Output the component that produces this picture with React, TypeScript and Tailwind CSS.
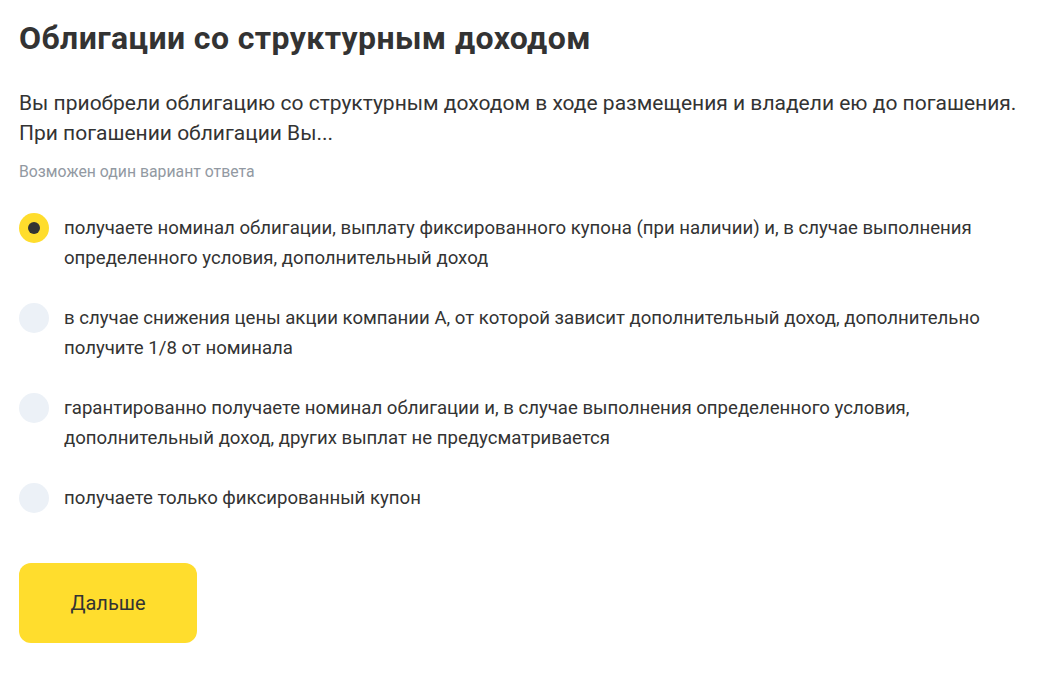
import React, {useState} from 'react';

const options = [
    'получаете номинал облигации, выплату фиксированного купона (при наличии) и, в случае выполнения определенного условия, дополнительный доход',
    'в случае снижения цены акции компании А, от которой зависит дополнительный доход, дополнительно получите 1/8 от номинала',
    'гарантированно получаете номинал облигации и, в случае выполнения определенного условия, дополнительный доход, других выплат не предусматривается',
    'получаете только фиксированный купон',
];

const App: React.FC = () => {
    const [selected, setSelected] = useState(0);

    return (
        <div className="min-h-screen bg-white text-[#333333] pl-[19px] pr-[3px] pt-[15px]" style={{fontFamily: 'Roboto, "Noto Sans", sans-serif'}}>
            <h1 className="text-[32px] leading-[46px] font-bold tracking-[0.4px]">Облигации со структурным доходом</h1>

            <p className="mt-[27px] text-[21px] leading-[30px]">
                Вы приобрели облигацию со структурным доходом в ходе размещения и владели ею до погашения. При погашении облигации Вы...
            </p>
            <p className="mt-[14px] text-[15.8px] leading-[20px] text-[#9299a2]">Возможен один вариант ответа</p>

            <div className="mt-[31px] flex flex-col gap-[30px] pr-[16px]">
                {options.map((text, i) => (
                    <label key={i} className="flex items-start gap-[15px] cursor-pointer" onClick={() => setSelected(i)}>
                        <span
                            className={`shrink-0 w-[30px] h-[30px] rounded-full flex items-center justify-center ${
                                selected === i ? 'bg-[#ffdd2d]' : 'bg-[#ecf1f7]'
                            }`}
                        >
                            {selected === i && <span className="w-[12px] h-[12px] rounded-full bg-[#333333]"/>}
                        </span>
                        <span className="text-[18.6px] leading-[30px]">{text}</span>
                    </label>
                ))}
            </div>

            <button className="mt-[50px] w-[178px] h-[80px] rounded-[12px] bg-[#ffdd2d] text-[20px] text-[#333333]">
                Дальше
            </button>
        </div>
    );
};

export default App;
